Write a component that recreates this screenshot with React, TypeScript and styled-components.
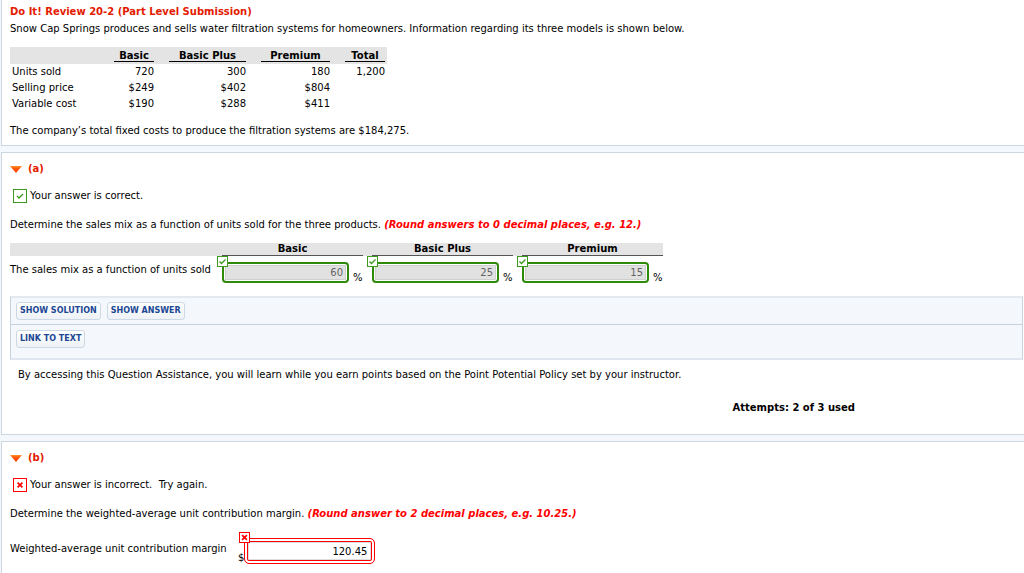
import React, { useState } from "react";
import styled, { createGlobalStyle } from "styled-components";

const GlobalStyle = createGlobalStyle`
  *, *::before, *::after { box-sizing: border-box; }
  body {
    margin: 0;
    overflow-x: hidden;
    background: #f4f8fc;
    color: #000;
    font: 10px/16px "DejaVu Sans", Verdana, sans-serif;
  }
`;

const Page = styled.main`
  display: flex;
  flex-direction: column;
  gap: 6px;
  padding-left: 1px;
`;

const Panel = styled.section<{ $first?: boolean }>`
  background: #fff;
  border: solid #ccd6e0;
  border-width: ${(p) => (p.$first ? "0 0 1px 1px" : "1px 0 1px 1px")};
  padding: ${(p) => (p.$first ? "4px 0 6px 8px" : "8px 0 18px 8px")};
`;

const Title = styled.h1`
  margin: 0 0 1px;
  font-size: 10px;
  line-height: 16px;
  color: #e31b00;
`;

const Text = styled.p`
  margin: 0;
`;

const Hint = styled.em`
  color: #f00;
  font-weight: bold;
`;

const DataTable = styled.table`
  border-collapse: collapse;
  table-layout: fixed;
  width: 377px;
  margin: 10px 0 11px;

  thead { background: #e4e4e4; }
  th, td { padding: 0 0 0 15px; text-align: right; }
  th:first-child, td:first-child { padding-left: 2px; text-align: left; font-weight: normal; }
  th:last-child, td:last-child { padding-right: 2px; }
`;

const Underlined = styled.span`
  display: block;
  height: 15px;
  margin-bottom: 2px;
  padding-top: 1px;
  border-bottom: 1px solid #000;
  text-align: center;
`;

const Toggle = styled.button`
  display: flex;
  align-items: center;
  gap: 6px;
  padding: 0;
  border: 0;
  background: none;
  color: #e31b00;
  font: inherit;
  font-weight: bold;
  cursor: pointer;
`;

const Result = styled.div`
  display: flex;
  align-items: center;
  gap: 3px;
  margin: 11px 0 13px 3px;
  white-space: pre;
`;

const MixTable = styled.table`
  border-collapse: collapse;
  table-layout: fixed;
  width: 653px;
  margin-top: 10px;

  th, td { padding: 0; vertical-align: top; }
  thead th { height: 13px; line-height: 12px; background: #e4e4e4; }
  tbody th { padding-top: 6px; text-align: left; font-weight: normal; }
  thead th + th { padding-left: 9px; }
  tbody td { padding: 6px 0 0 9px; }
`;

const MixHeading = styled.span`
  display: block;
  border-bottom: 1px solid #555;
`;

const Answer = styled.div`
  display: flex;
  align-items: flex-end;
  gap: 4px;

  > span { line-height: 10px; }
`;

const FieldBox = styled.div`
  position: relative;
  display: flex;
`;

const Badge = styled.span`
  position: absolute;
  top: -6px;
  left: -5px;
  display: flex;
`;

const CorrectInput = styled.input`
  width: 127px;
  height: 21px;
  padding: 0 4px;
  border: 2px solid #2f8a0b;
  border-radius: 4px;
  background: #e1e1e1;
  box-shadow: inset 0 0 0 1px #fff, inset 0 0 0 2px #cfcfcf;
  color: #666;
  font: inherit;
  text-align: right;
`;

const WrongInput = styled.input`
  width: 131px;
  height: 26px;
  padding: 0 7px;
  border: 1px solid #f00;
  border-radius: 5px;
  background: #fff;
  box-shadow: inset 0 0 0 2px #fff, inset 0 0 0 3px #f00, inset 0 0 0 4px #ddd;
  color: #000;
  font: inherit;
  text-align: right;
`;

const Toolbar = styled.div`
  margin: 13px 1px 0 0;
  border: 1px solid #c6d3df;
  border-top: 2px solid #e3e9ef;
  border-bottom: 2px solid #dfe6ef;
  background: #f4f8fc;
`;

const ToolRow = styled.div<{ $last?: boolean }>`
  display: flex;
  gap: 6px;
  padding: ${(p) => (p.$last ? "5px 5px 10px" : "4px 5px")};
  border-bottom: ${(p) => (p.$last ? "0" : "1px solid #c6d3df")};
`;

const ToolButton = styled.button`
  height: 18px;
  padding: 0 3px;
  border: 1px solid #ccd8e3;
  border-radius: 3px;
  background: linear-gradient(#fff, #eef2f6);
  color: #1c4793;
  font: bold 8px/16px "DejaVu Sans", Verdana, sans-serif;
  white-space: nowrap;
  cursor: pointer;
`;

const Policy = styled.p`
  margin: 7px 0 0 8px;
`;

const Attempts = styled.p`
  max-width: 845px;
  margin: 17px 0 0;
  font-weight: bold;
  text-align: right;
`;

const MarginRow = styled.div`
  display: grid;
  grid-template-columns: 228px auto;
  justify-content: start;
  margin-top: 16px;

  label { padding-top: 3px; }
`;

const CurrencyAnswer = styled.div`
  display: flex;
  align-items: flex-end;

  > span { line-height: 12px; }
`;

const Arrow = () => (
  <svg width="12" height="7" aria-hidden="true">
    <defs>
      <linearGradient id="arrow" x1="0" y1="0" x2="0" y2="1">
        <stop offset="0" stopColor="#ff9a2e" />
        <stop offset="0.3" stopColor="#ff5a12" />
        <stop offset="1" stopColor="#f23c00" />
      </linearGradient>
    </defs>
    <path d="M0 0H12L6 7Z" fill="url(#arrow)" />
  </svg>
);

const Mark = ({ ok, size }: { ok: boolean; size: number }) => (
  <svg width={size} height={size} viewBox={`0 0 ${size} ${size}`} aria-hidden="true">
    <rect x=".5" y=".5" width={size - 1} height={size - 1} fill="#fff" stroke={ok ? "#3c9a1c" : "#f00"} />
    <g transform={`translate(${size / 2} ${size / 2})`} fill="none">
      {ok ? (
        <path d="M-3 0L-1 2L3-2" stroke="#3c9a1c" strokeWidth="1.3" />
      ) : (
        <path d="M-2.4-2.4L2.4 2.4M2.4-2.4L-2.4 2.4" stroke="#f00" strokeWidth="1.7" />
      )}
    </g>
  </svg>
);

const models = ["Basic", "Basic Plus", "Premium"];
const rows = [
  ["Units sold", "720", "300", "180", "1,200"],
  ["Selling price", "$249", "$402", "$804", ""],
  ["Variable cost", "$190", "$288", "$411", ""],
];
const mix = ["60", "25", "15"];

export default function App() {
  const [openA, setOpenA] = useState(true);
  const [openB, setOpenB] = useState(true);

  return (
    <>
      <GlobalStyle />
      <Page>
        <Panel $first>
          <Title>Do It! Review 20-2 (Part Level Submission)</Title>
          <Text>
            Snow Cap Springs produces and sells water filtration systems for homeowners. Information
            regarding its three models is shown below.
          </Text>
          <DataTable>
            <colgroup>
              <col style={{ width: 89 }} />
              <col style={{ width: 55 }} />
              <col style={{ width: 92 }} />
              <col style={{ width: 84 }} />
              <col style={{ width: 57 }} />
            </colgroup>
            <thead>
              <tr>
                <th />
                {[...models, "Total"].map((m) => (
                  <th key={m} scope="col"><Underlined>{m}</Underlined></th>
                ))}
              </tr>
            </thead>
            <tbody>
              {rows.map(([name, ...values]) => (
                <tr key={name}>
                  <th scope="row">{name}</th>
                  {values.map((v, i) => <td key={i}>{v}</td>)}
                </tr>
              ))}
            </tbody>
          </DataTable>
          <Text>The company’s total fixed costs to produce the filtration systems are $184,275.</Text>
        </Panel>

        <Panel>
          <Toggle type="button" aria-expanded={openA} onClick={() => setOpenA(!openA)}>
            <Arrow />(a)
          </Toggle>
          {openA && (
            <>
              <Result><Mark ok size={14} />Your answer is correct.</Result>
              <Text>
                Determine the sales mix as a function of units sold for the three products.{" "}
                <Hint>(Round answers to 0 decimal places, e.g. 12.)</Hint>
              </Text>
              <MixTable>
                <colgroup>
                  <col style={{ width: 203 }} />
                  <col span={3} />
                </colgroup>
                <thead>
                  <tr>
                    <th />
                    {models.map((m) => (
                      <th key={m} scope="col"><MixHeading>{m}</MixHeading></th>
                    ))}
                  </tr>
                </thead>
                <tbody>
                  <tr>
                    <th scope="row">The sales mix as a function of units sold</th>
                    {mix.map((v, i) => (
                      <td key={v}>
                        <Answer>
                          <FieldBox>
                            <CorrectInput readOnly value={v} aria-label={`${models[i]} sales mix`} />
                            <Badge><Mark ok size={11} /></Badge>
                          </FieldBox>
                          <span>%</span>
                        </Answer>
                      </td>
                    ))}
                  </tr>
                </tbody>
              </MixTable>
              <Toolbar>
                <ToolRow>
                  <ToolButton type="button">SHOW SOLUTION</ToolButton>
                  <ToolButton type="button">SHOW ANSWER</ToolButton>
                </ToolRow>
                <ToolRow $last>
                  <ToolButton type="button">LINK TO TEXT</ToolButton>
                </ToolRow>
              </Toolbar>
              <Policy>
                By accessing this Question Assistance, you will learn while you earn points based on
                the Point Potential Policy set by your instructor.
              </Policy>
              <Attempts>Attempts: 2 of 3 used</Attempts>
            </>
          )}
        </Panel>

        <Panel>
          <Toggle type="button" aria-expanded={openB} onClick={() => setOpenB(!openB)}>
            <Arrow />(b)
          </Toggle>
          {openB && (
            <>
              <Result><Mark ok={false} size={14} />{"Your answer is incorrect.  Try again."}</Result>
              <Text>
                Determine the weighted-average unit contribution margin.{" "}
                <Hint>(Round answer to 2 decimal places, e.g. 10.25.)</Hint>
              </Text>
              <MarginRow>
                <label htmlFor="margin">Weighted-average unit contribution margin</label>
                <CurrencyAnswer>
                  <span>$</span>
                  <FieldBox>
                    <WrongInput id="margin" defaultValue="120.45" />
                    <Badge><Mark ok={false} size={11} /></Badge>
                  </FieldBox>
                </CurrencyAnswer>
              </MarginRow>
            </>
          )}
        </Panel>
      </Page>
    </>
  );
}
